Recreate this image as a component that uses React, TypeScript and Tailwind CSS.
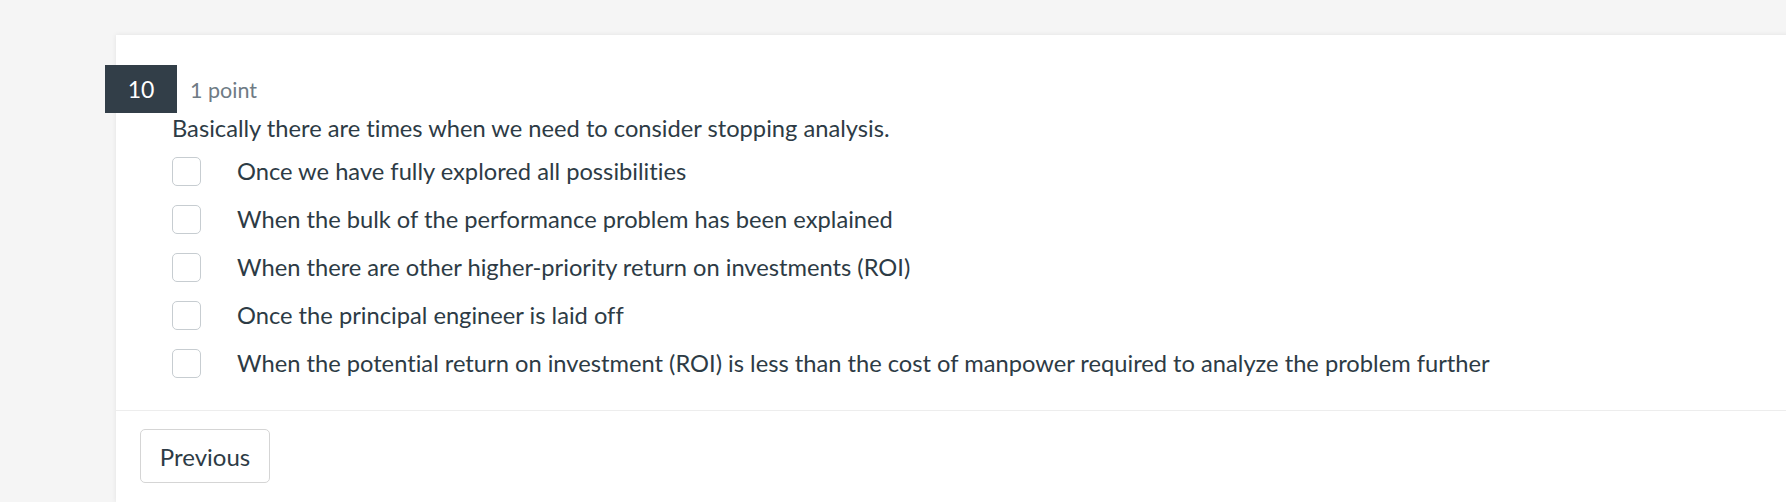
import React, { useState } from "react";

const options = [
    "Once we have fully explored all possibilities",
    "When the bulk of the performance problem has been explained",
    "When there are other higher-priority return on investments (ROI)",
    "Once the principal engineer is laid off",
    "When the potential return on investment (ROI) is less than the cost of manpower required to analyze the problem further",
];

const App: React.FC = () => {
    const [checked, setChecked] = useState<boolean[]>(options.map(() => false));

    const toggle = (i: number) =>
        setChecked((prev) => prev.map((v, j) => (j === i ? !v : v)));

    return (
        <div
            className="min-h-[502px] bg-[#f5f5f5] pt-[35px] pl-[116px] overflow-hidden text-[#2d3b45] [font-variant-ligatures:none]"
            style={{ fontFamily: "Lato, 'Noto Sans', sans-serif" }}
        >
            <div className="bg-white w-[1700px] min-h-[467px] shadow-[0_0_5px_rgba(0,0,0,0.08)]">
                {/* Question body */}
                <div className="pt-[30px] pb-[23px]">
                    <div className="flex items-center -ml-[11px] h-[48px]">
                        <div className="w-[72px] h-[48px] bg-[#323e48] text-white text-[23px] flex items-center justify-center">
                            10
                        </div>
                        <span className="ml-[13px] text-[21.5px] text-[#6f7b85] mt-[2px]">
                            1 point
                        </span>
                    </div>
                    <div className="ml-[56px] text-[23.7px] leading-[30px]">
                        Basically there are times when we need to consider stopping analysis.
                    </div>
                    <div className="ml-[56px] mt-[4px] flex flex-col">
                        {options.map((opt, i) => (
                            <label
                                key={i}
                                className="flex items-center h-[48px] cursor-pointer"
                                onClick={() => toggle(i)}
                            >
                                <span
                                    className={`w-[29px] h-[29px] rounded-[5px] border shrink-0 ${
                                        checked[i]
                                            ? "border-[#2d3b45] bg-[#2d3b45]"
                                            : "border-[#c7cdd1] bg-white"
                                    }`}
                                />
                                <span className="ml-[36px] text-[23.7px] leading-[30px] whitespace-nowrap">
                                    {opt}
                                </span>
                            </label>
                        ))}
                    </div>
                </div>

                {/* Footer */}
                <div className="border-t border-[#ededed] pt-[18px] pl-[24px]">
                    <button className="w-[130px] h-[54px] rounded-[5px] border border-[#d5d5d5] bg-white text-[24px] text-[#2d3b45] pt-[2px]">
                        Previous
                    </button>
                </div>
            </div>
        </div>
    );
};

export default App;
